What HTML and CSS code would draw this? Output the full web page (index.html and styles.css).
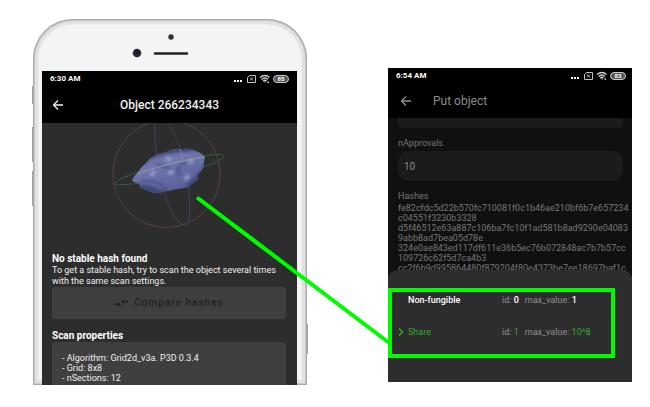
FILE: index.html
```html
<!DOCTYPE html>
<html lang="en">
<head>
<meta charset="utf-8">
<meta name="viewport" content="width=device-width, initial-scale=1">
<title>Object scanner</title>
<link rel="stylesheet" href="styles.css">
</head>
<body>
<main class="board">
  <section class="phone">
    <span class="key key-mute"></span><span class="key key-up"></span><span class="key key-down"></span><span class="key key-power"></span>
    <div class="camera">
      <svg class="sensors" viewBox="0 0 76 26" aria-hidden="true"><circle cx="39" cy="5" r="2.700" fill="#303034"/><circle cx="5" cy="21" r="4.300" fill="#29292d"/><circle cx="5" cy="21" r="2" fill="#171b38"/><path d="M23 21.500H55" stroke="#222" stroke-width="2.400" stroke-linecap="round"/></svg>
    </div>
    <div class="screen scan">
      <div class="statusbar"><span>6:30 AM</span>
        <span class="status-icons"><svg viewBox="0 0 37 10" aria-hidden="true"><path d="M0 6h2v2h-2zM3 6h2v2h-2zM6 6h2v2h-2z" fill="#fff"/><path d="M15.500 1.500H21.500V8.500H13.500V3.500Z M16 3.500l3 3M19 3.500l-3 3" fill="none" stroke="#c4c4c4"/><path d="M26 3.500Q31 -.5 35.500 3.500M27.500 5.500Q31 2.500 34 5.500M29 7Q31 5.500 32.500 7" fill="none" stroke="#d0d0d0" stroke-width="1.300"/><path d="M30 7.500h2l-1 1.500zM33.500 7.500h1.500v1.500h-1.500z" fill="#ccc"/></svg><span class="battery">85</span></span>
      </div>
      <header class="topbar"><button class="back" aria-label="Back"><svg viewBox="0 0 12 12"><path d="M11 6H1.500M6 1.500L1.500 6L6 10.500" fill="none" stroke="currentColor" stroke-width="1.300"/></svg></button><h1>Object 266234343</h1></header>
      <svg class="model" viewBox="42 123 255 127" role="img" aria-label="Scanned object">
        <defs>
          <linearGradient id="rock" x1="0" y1="0" x2=".6" y2="1"><stop stop-color="#585f94"/><stop offset=".45" stop-color="#7077ae"/><stop offset="1" stop-color="#565d94"/></linearGradient>
          <filter id="soft" x="-50%" y="-50%" width="200%" height="200%"><feGaussianBlur stdDeviation="1.500"/></filter>
          <clipPath id="body"><path d="M132 180Q134 176 138 172Q142 166 147 162Q151 157 157 154Q163 153 167 152Q174 148 180 149Q189 148 194 150L202 154Q206 156 204 162Q204 167 202 170L197 176Q199 179 196 181L188 187Q182 189 176 189Q170 191 163 192Q157 194 151 192L141 188Q139 186 139 183Q133 183 132 180Z"/></clipPath>
        </defs>
        <circle cx="166.500" cy="173.800" r="53.700" fill="none" stroke="#614644" stroke-width=".8"/>
        <path d="M155 121C154 155 160 187 171 210C177 222 184 228 188 224C191 218 191 188 183 158C179 142 173 129 166 121" fill="none" stroke="#42466a" stroke-width=".8"/>
        <path d="M115 184C114 179 143 170 171 163C201 156 223 152 224 156C222 163 170 180 140 183C126 185 116 185 115 184Z" fill="none" stroke="#3c6040" stroke-width=".9"/>
        <g clip-path="url(#body)">
          <path d="M130 145H208V195H130Z" fill="url(#rock)"/>
          <g filter="url(#soft)">
            <path d="M140 165Q158 151 203 151L205 146H135ZM139 185Q151 184 159 190L171 191L161 196H139ZM207 163L193 179L184 187L195 188L203 177Z" fill="#3e4678"/>
            <path d="M140 182Q158 178 166 190M175 173Q181 161 191 162M181 170L177 176M156 164L170 168" fill="none" stroke="#484f82" stroke-width="2"/>
            <path d="M150 175L155 172M166 158L171 160M168 173L174 172M185 180L189 175M188 163L193 160" stroke="#9fa5d0" stroke-width="3"/>
          </g>
        </g>
        <path d="M138 174C157 166 184 160 205 157" fill="none" stroke="#a2a892" stroke-width=".8"/>
        <path d="M180 149L184 162" stroke="#8488b5" stroke-width=".8"/>
      </svg>
      <div class="details">
        <h2>No stable hash found</h2>
        <p>To get a stable hash, try to scan the object several times with the same scan settings.</p>
        <button class="compare" disabled><svg viewBox="0 0 14 10" aria-hidden="true"><path d="M0 6.500H5M14 3.500H9" stroke="currentColor" stroke-width="1.300"/><path d="M4 4V9L7 6.500ZM10 1V6L7 3.500Z" fill="currentColor"/></svg>Compare hashes</button>
        <h2>Scan properties</h2>
        <ul class="properties"><li>- Algorithm: Grid2d_v3a. P3D 0.3.4</li><li>- Grid: 8x8</li><li>- nSections: 12</li></ul>
      </div>
    </div>
  </section>
  <section class="screen put">
    <div class="statusbar"><span>6:54 AM</span>
      <span class="status-icons"><svg viewBox="0 0 37 10" aria-hidden="true"><path d="M0 6h2v2h-2zM3 6h2v2h-2zM6 6h2v2h-2z" fill="#fff"/><path d="M15.500 1.500H21.500V8.500H13.500V3.500Z M16 3.500l3 3M19 3.500l-3 3" fill="none" stroke="#c4c4c4"/><path d="M26 3.500Q31 -.5 35.500 3.500M27.500 5.500Q31 2.500 34 5.500M29 7Q31 5.500 32.500 7" fill="none" stroke="#d0d0d0" stroke-width="1.300"/><path d="M30 7.500h2l-1 1.500zM33.500 7.500h1.500v1.500h-1.500z" fill="#ccc"/></svg><span class="battery">83</span></span>
    </div>
    <header class="topbar"><button class="back" aria-label="Back"><svg viewBox="0 0 12 12"><path d="M11 6H1.500M6 1.500L1.500 6L6 10.500" fill="none" stroke="currentColor" stroke-width="1.300"/></svg></button><h1>Put object</h1></header>
    <div class="form">
      <div class="previous"></div>
      <label for="approvals">nApprovals</label>
      <input id="approvals" type="text" value="10">
      <h2>Hashes</h2>
      <div class="hashes">fe82cfdc5d22b570fc710081f0c1b46ae210bf6b7e657234<br>c04551f3230b3328<br>d5f46512e63a887c106ba7fc10f1ad581b8ad9290e04083<br>9abb8ad7bea05d78e<br>324e0ae843ed117df611e36b5ec76b072848ac7b7b57cc<br>109726c62f5d7ca4b3<br>cc2f6b9d995864480f879204f80e4373be7ee18697baf1c</div>
    </div>
    <div class="sheet">
      <div class="assets">
        <button class="asset"><span class="name">Non-fungible</span><span>id: <b>0</b></span><span>max_value: <b>1</b></span></button>
        <button class="asset selected"><svg viewBox="0 0 6 8" aria-hidden="true"><path d="M1 .5L4.500 4L1 7.500" fill="none" stroke="currentColor" stroke-width="1.500"/></svg><span class="name">Share</span><span>id: <b>1</b></span><span>max_value: <b>10^8</b></span></button>
      </div>
    </div>
  </section>
  <svg class="connector" viewBox="0 0 650 407" preserveAspectRatio="none" aria-hidden="true"><path d="M197 197.500L390 343.500" stroke="#00fa00" stroke-width="4"/></svg>
</main>
</body>
</html>
```
FILE: styles.css
```css
* { box-sizing: border-box; }
body { margin: 0; background: #fff; color: #f0f0f0; font: 9px/10px Roboto, sans-serif; }
h1, h2, p, ul { margin: 0; padding: 0; }
button { padding: 0; border: 0; background: none; color: inherit; font: inherit; }
.board {
  position: relative;
  display: grid;
  grid-template-columns: 274fr 244fr;
  gap: 81px;
  align-items: start;
  padding: 19px 18px 22px 33px;
}
.phone {
  position: relative;
  padding: 0 10px 0 9px;
  border-radius: 40px 40px 0 0;
  background: #f3f5f4;
  box-shadow: inset 0 0 0 1px #a9abaa, inset 0 0 0 2px #c5c8c7, inset 0 0 0 5px #dfe2e1, inset 0 0 0 6px #ebeeed;
}
.key { position: absolute; left: -1px; width: 1px; background: #a0a2a1; }
.key-mute { top: 67px; height: 18px; }
.key-up { top: 108px; height: 35px; }
.key-down { top: 152px; height: 35px; }
.key-power { left: auto; right: -1px; top: 305px; height: 30px; }
.camera { display: flex; justify-content: center; height: 52px; padding-top: 13px; }
.sensors { width: 76px; height: 26px; }
.screen { overflow: hidden; background: #2d2d2d; }
.statusbar {
  display: flex;
  align-items: center;
  justify-content: space-between;
  height: 16px;
  padding: 0 8px;
  background: #000;
  color: #fff;
  font-size: 8px;
  font-weight: 700;
}
.status-icons { display: flex; align-items: center; gap: 2px; }
.status-icons svg { width: 37px; height: 10px; }
.battery {
  width: 16px;
  height: 8px;
  border: 1px solid #c8c8c8;
  border-radius: 4px;
  background: #555;
  font-size: 6px;
  line-height: 6px;
  text-align: center;
}
.topbar { display: flex; align-items: center; height: 36px; padding: 0 10px; background: #000; }
.back { width: 12px; height: 12px; }
.back svg { display: block; width: 12px; height: 12px; }
h1 { font-size: 12px; line-height: 16px; }
.scan h1 { flex: 1; padding-right: 12px; text-align: center; font-weight: 500; }
.model { display: block; width: 100%; }
.details { padding: 3px 11px 0 10px; }
.details h2 { font-size: 10px; line-height: 12px; font-weight: 700; color: #fff; }
.details p { line-height: 11px; }
.compare {
  display: flex;
  align-items: center;
  justify-content: center;
  gap: 6px;
  width: 100%;
  height: 32px;
  margin: 0 0 11px;
  border-radius: 3px;
  background: #3f3f3f;
  color: #222;
  font-size: 10px;
  font-weight: 500;
  letter-spacing: 1px;
}
.compare svg { width: 14px; height: 10px; }
.properties { list-style: none; padding: 11px 10px 2px; border-radius: 3px 3px 0 0; background: #3f3f3f; }
.put { margin-top: 49px; background: #101010; }
.put .statusbar { padding-right: 6px; }
.put .topbar { height: 34px; gap: 21px; padding: 0 12px; color: #8c8c8c; }
.put h1 { font-weight: 400; }
.form { padding: 0 9px 0 10px; color: #777; }
.previous { height: 10px; margin-bottom: 10px; border-radius: 0 0 3px 3px; background: #1b1b1b; }
.form label { display: block; margin-bottom: 3px; }
.form input {
  display: block;
  width: 100%;
  height: 30px;
  padding: 0 6px;
  border: 0;
  border-radius: 10px;
  background: #1b1b1b;
  color: #888;
  font: 10px Roboto, sans-serif;
}
.form h2 { margin: 10px 0 2px; font-size: 9px; font-weight: 400; line-height: 10px; }
.hashes { margin-right: -9px; white-space: nowrap; }
.sheet { position: relative; margin-top: -3px; padding: 18px 17px 24px 0; border-radius: 9px 9px 0 0; background: #2d2d2d; }
.assets { border: 4px solid #00fa00; padding: 0 0 7px; }
.asset {
  position: relative;
  display: flex;
  gap: 6px;
  width: 100%;
  height: 31px;
  padding-left: 16px;
  align-items: center;
  text-align: left;
  color: #8f8f8f;
}
.asset:first-child { height: 16px; margin: 0 0 8px; }
.asset b { color: #fff; font-weight: 500; }
.asset .name { width: 88px; color: #fff; font-weight: 500; }
.asset svg { position: absolute; left: 6px; width: 6px; height: 8px; }
.selected svg, .selected b, .selected .name { color: #35a835; font-weight: 400; }
.connector { position: absolute; inset: 0; width: 100%; height: 100%; pointer-events: none; }
```
